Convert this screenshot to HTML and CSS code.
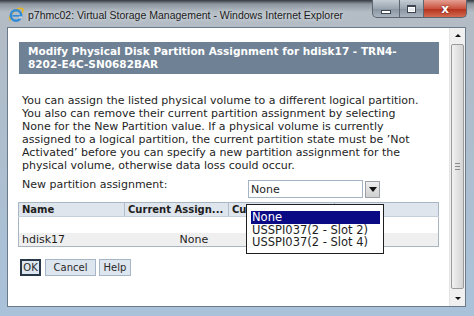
FILE: index.html
```html
<!DOCTYPE html>
<html>
<head>
    <meta charset="UTF-8">
    <title>p7hmc02: Virtual Storage Management</title>
    <link rel="stylesheet" href="styles.css">
</head>
<body>
    <div class="window">
        <div class="titlebar">
            <svg class="ie-logo" width="16" height="16" viewBox="0 0 16 16">
                <path d="M2.5 13.5 C0.5 11 3 6 7 3.5 C10 1.6 13.5 0.8 14.6 2 C15.4 3 14.6 5 13.4 6.5" fill="none" stroke="#e8b420" stroke-width="1.6"/>
                <circle cx="8" cy="8.5" r="5.2" fill="none" stroke="#2f8ad8" stroke-width="2.4"/>
                <rect x="4.4" y="8" width="7.4" height="1.6" fill="#2f8ad8"/>
                <rect x="11" y="9.4" width="3" height="2.2" fill="#c9d2db"/>
            </svg>
            <span class="title">p7hmc02: Virtual Storage Management - Windows Internet Explorer</span>
            <div class="controls">
                <div class="ctl min"><span class="min-bar"></span></div>
                <div class="ctl max"><span class="max-box"></span></div>
                <div class="ctl close">x</div>
            </div>
        </div>
        <div class="frame">
            <div class="client">
                <div class="page">
                    <div class="header">Modify Physical Disk Partition Assignment for hdisk17 - TRN4-8202-E4C-SN0682BAR</div>
                    <p class="intro">
                        You can assign the listed physical volume to a different logical partition.<br>
                        You also can remove their current partition assignment by selecting<br>
                        None for the New Partition value. If a physical volume is currently<br>
                        assigned to a logical partition, the current partition state must be ’Not<br>
                        Activated’ before you can specify a new partition assignment for the<br>
                        physical volume, otherwise data loss could occur.
                    </p>
                    <div class="assign-row">
                        <div class="assign-label">New partition assignment:</div>
                        <div class="select-box">None</div>
                        <div class="select-btn"><span class="tri-down"></span></div>
                    </div>
                    <table class="disks">
                        <tr class="head">
                            <th>Name</th>
                            <th>Current Assign...</th>
                            <th>Cu</th>
                            <th></th>
                        </tr>
                        <tr class="blank">
                            <td></td><td></td><td></td><td></td>
                        </tr>
                        <tr class="data">
                            <td>hdisk17</td>
                            <td class="assigned">None</td>
                            <td></td>
                            <td></td>
                        </tr>
                    </table>
                    <div class="buttons">
                        <button class="btn btn-ok">OK</button>
                        <button class="btn btn-cancel">Cancel</button>
                        <button class="btn btn-help">Help</button>
                    </div>
                    <ul class="dropdown-list">
                        <li class="selected">None</li>
                        <li>USSPI037(2 - Slot 2)</li>
                        <li>USSPI037(2 - Slot 4)</li>
                    </ul>
                </div>
                <div class="scrollbar">
                    <div class="sb-arrow"><span class="tri-up"></span></div>
                    <div class="sb-thumb"><span class="grip"></span></div>
                    <div class="sb-arrow"><span class="tri-down small"></span></div>
                </div>
            </div>
        </div>
    </div>
</body>
</html>
```
FILE: styles.css
```css
body {
    margin: 0;
    padding: 0;
    width: 474px;
    height: 316px;
    overflow: hidden;
    background: #a9bfd4;
    font-family: "DejaVu Sans", Verdana, sans-serif;
}

.window {
    height: 316px;
    display: flex;
    flex-direction: column;
    background: linear-gradient(to bottom, #34393e 0px, #8d969f 4px, #b4bcc4 12px, #b0bcc8 60px, #a9c2da 316px);
}

.titlebar {
    height: 27px;
    display: flex;
    align-items: flex-start;
}

.ie-logo {
    margin: 7px 0 0 8px;
}

.title {
    margin: 8px 0 0 4px;
    font-family: "Liberation Sans", Arial, sans-serif;
    font-size: 10.5px;
    line-height: 14px;
    color: #1c1c1c;
    text-shadow: 0 0 4px #e8ecf0;
    white-space: nowrap;
}

.controls {
    margin-left: auto;
    margin-right: 7px;
    display: flex;
    height: 18px;
}

.ctl {
    height: 17px;
    border: 1px solid #5d6670;
    border-top: none;
    background: linear-gradient(to bottom, #c4ccd4, #9aa5b0 50%, #8793a0 51%, #a9b4bf);
    display: flex;
    align-items: center;
    justify-content: center;
}

.ctl.min {
    width: 26px;
    border-radius: 0 0 0 5px;
}

.ctl.max {
    width: 23px;
    border-left: none;
}

.ctl.close {
    width: 42px;
    border-left: none;
    border-radius: 0 0 5px 0;
    background: linear-gradient(to bottom, #e4a093, #c9533f 50%, #b3301c 51%, #d26a4f);
    color: #ffffff;
    font-weight: bold;
    font-size: 12px;
    line-height: 12px;
    text-shadow: 0 0 2px #5a1008;
}

.min-bar {
    width: 8px;
    height: 2px;
    margin-top: 6px;
    background: #ffffff;
    border: 1px solid #3d4650;
}

.max-box {
    width: 7px;
    height: 5px;
    border: 1px solid #3d4650;
    border-top-width: 2px;
    background: #e6ecf2;
    box-shadow: 0 0 0 1px #ffffff inset;
}

.frame {
    flex: 1;
    display: flex;
    padding: 0 8px 9px 7px;
}

.client {
    flex: 1;
    display: flex;
    background: #ffffff;
    border: 1px solid #6b7a89;
}

.page {
    flex: 1;
    min-width: 0;
    position: relative;
    padding: 14px 10px 0 11px;
    font-size: 11px;
    color: #1e1e1e;
}

.header {
    background: #6e8195;
    color: #ffffff;
    font-weight: bold;
    font-size: 10.5px;
    line-height: 13px;
    padding: 3px 9px 3px 9px;
    height: 26px;
}

.intro {
    margin: 20px 0 0 0;
    padding-left: 3px;
    line-height: 13px;
    white-space: nowrap;
}

.assign-row {
    display: grid;
    grid-template-columns: 224px 115px 15px;
    column-gap: 2px;
    align-items: start;
    margin-top: 8px;
    padding-left: 3px;
}

.assign-label {
    line-height: 10px;
}

.select-box {
    height: 16px;
    border: 1px solid #a4b4c4;
    padding-left: 2px;
    line-height: 18px;
}

.select-btn {
    height: 15px;
    margin-top: 1px;
    border: 1px solid #9aa0a6;
    background: linear-gradient(to bottom, #eeeeee, #cfcfcf);
    display: flex;
    align-items: center;
    justify-content: center;
}

.tri-down {
    width: 0;
    height: 0;
    border-left: 4px solid transparent;
    border-right: 4px solid transparent;
    border-top: 5px solid #111111;
}

.tri-down.small {
    border-left-width: 3px;
    border-right-width: 3px;
    border-top-width: 3px;
}

.tri-up {
    width: 0;
    height: 0;
    border-left: 3px solid transparent;
    border-right: 3px solid transparent;
    border-bottom: 3px solid #111111;
}

table.disks {
    margin: 4px 0 0 -1px;
    width: 421px;
    border-collapse: collapse;
    border: 1px solid #a8b6c4;
    table-layout: fixed;
}

.disks th,
.disks td {
    padding: 0 3px;
    text-align: left;
    white-space: nowrap;
    overflow: hidden;
}

.disks tr.head th {
    background: #dfe5ec;
    border-right: 1px solid #aebccb;
    border-bottom: 1px solid #c5d0db;
    font-size: 10px;
    height: 13px;
    line-height: 13px;
}

.disks tr.head th:last-child {
    border-right: none;
}

.disks th:nth-child(1) { width: 99px; }
.disks th:nth-child(2) { width: 97px; }
.disks th:nth-child(3) { width: 99px; }

.disks tr.blank td {
    height: 16px;
}

.disks tr.data td {
    background: #efefef;
    height: 13px;
    line-height: 13px;
}

.disks td.assigned {
    padding-left: 55px;
}

.buttons {
    display: flex;
    gap: 3px;
    margin-top: 12px;
    padding-left: 1px;
}

.btn {
    font-family: "DejaVu Sans", Verdana, sans-serif;
    font-size: 10px;
    color: #2a2a2a;
    height: 17px;
    padding: 0;
    background: #dde5ee;
    border: 1px solid #a6b6c8;
    border-radius: 0;
    line-height: 14px;
}

.btn-ok {
    width: 21px;
    border: 2px solid #283848;
}

.btn-cancel {
    width: 51px;
    margin-left: 1px;
}

.btn-help {
    width: 32px;
}

.dropdown-list {
    position: absolute;
    left: 238px;
    top: 176px;
    width: 129px;
    margin: 0;
    padding: 6px 3px 4px 4px;
    list-style: none;
    background: #ffffff;
    border: 1px solid #1e1e1e;
    font-size: 11.5px;
    line-height: 12.5px;
}

.dropdown-list li {
    padding-left: 1px;
    white-space: nowrap;
}

.dropdown-list li.selected {
    background: #0a0a84;
    color: #ffffff;
}

.scrollbar {
    width: 15px;
    display: flex;
    flex-direction: column;
    background: #f0f0f0;
    border-left: 1px solid #e4e4e4;
}

.sb-arrow {
    height: 15px;
    display: flex;
    align-items: center;
    justify-content: center;
}

.sb-thumb {
    flex: 1;
    margin: 1px 1px 2px 1px;
    border: 1px solid #9b9b9b;
    border-radius: 2px;
    background: linear-gradient(to right, #f2f2f2, #e2e2e2 50%, #d4d4d4);
    display: flex;
    align-items: center;
    justify-content: center;
}

.grip {
    width: 5px;
    height: 5px;
    border-top: 1px solid #8a8a8a;
    border-bottom: 1px solid #8a8a8a;
    background: linear-gradient(to bottom, transparent 2px, #8a8a8a 2px, #8a8a8a 3px, transparent 3px);
}
```
